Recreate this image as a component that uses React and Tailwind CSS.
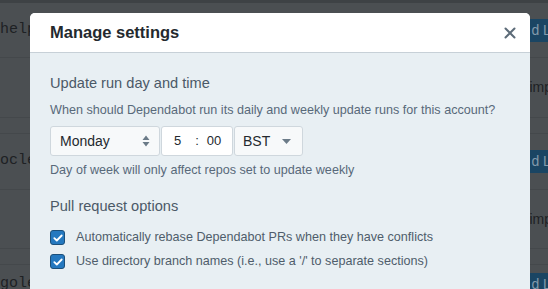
import React from 'react';

// Background table rows that sit behind the dimmed modal backdrop.
const rows = [
  { h: 55, left: 'chelp', right: 'btn' },
  { h: 60, left: 'y', right: 'imp' },
  { h: 16, left: '', right: '' },
  { h: 56, left: 'docle', right: 'btn' },
  { h: 59, left: 'y', right: 'imp' },
  { h: 16, left: '', right: '' },
  { h: 40, left: 'cgole', right: 'btn' },
];

const Checkbox = ({ label }) => (
  <label className="flex items-center gap-[11px] text-[12.6px] leading-[15px] text-[#4f5d6b]">
    <span className="flex h-[15px] w-[15px] items-center justify-center rounded-[3px] border border-[#1b4f7a] bg-[#2478bf]">
      <svg width="10" height="8" viewBox="0 0 10 8" fill="none">
        <path d="M1.3 4.1 3.8 6.5 8.7 1.5" stroke="white" strokeWidth="1.8" strokeLinecap="round" strokeLinejoin="round" />
      </svg>
    </span>
    {label}
  </label>
);

const App = () => {
  return (
    <div className="relative h-[289px] w-[548px] overflow-hidden bg-[#4b4f52]" style={{ fontFamily: '"Liberation Sans", Arial, sans-serif' }}>
      <div className="flex flex-col border-t-[3px] border-[#3e4245]">
        {rows.map((r, i) => (
          <div key={i} className="flex items-center justify-between border-b border-[#44484b]" style={{ height: r.h }}>
            <span className="-ml-[9px] text-[15px] text-[#1e2124]" style={{ fontFamily: '"Liberation Mono", monospace' }}>{r.left}</span>
            {r.right === 'btn' && (
              <span className="-mr-[12px] rounded-[3px] bg-[#1a4563] px-[6px] py-[1px] text-[14px] text-[#8299ab]">d Li</span>
            )}
            {r.right === 'imp' && <span className="-mr-[4px] text-[14px] text-[#1e2124]">imp</span>}
          </div>
        ))}
      </div>

      <div className="absolute left-[30px] top-[13px] w-[500px] overflow-hidden rounded-t-[5px] bg-[#e8eff3]">
        <div className="flex h-[40px] items-center justify-between border-b border-[#c7d0d7] bg-white pl-[20px] pr-[14px]">
          <h3 className="text-[16.5px] font-bold text-[#24292e]">Manage settings</h3>
          <svg width="12" height="12" viewBox="0 0 12 12" className="text-[#5c6b78]">
            <path d="M1.5 1.5 10.5 10.5M10.5 1.5 1.5 10.5" stroke="currentColor" strokeWidth="2" strokeLinecap="round" />
          </svg>
        </div>

        <div className="flex flex-col px-[20px] pb-[20px] pt-[21px]">
          <h4 className="text-[14.6px] leading-[18px] text-[#4b5967]">Update run day and time</h4>
          <p className="mt-[10px] text-[12.6px] leading-[16px] text-[#58697a]">
            When should Dependabot run its daily and weekly update runs for this account?
          </p>

          <div className="mt-[8px] flex h-[30px] gap-[1px] text-[14px] text-[#24292e]">
            <div className="flex w-[110px] items-center justify-between rounded-[3px] border border-[#cfd7dd] bg-[#f7f9fa] pl-[9px] pr-[9px]">
              Monday
              <svg width="8" height="12" viewBox="0 0 8 12" className="text-[#6b7b88]">
                <path d="M4 0.5 7.5 5H0.5Z M4 11.5 7.5 7H0.5Z" fill="currentColor" />
              </svg>
            </div>
            <div className="flex w-[72px] items-center rounded-[3px] border border-[#cfd7dd] bg-white pl-[12px] text-[13px]">
              <span>5</span>
              <span className="ml-[14px]">:</span>
              <span className="ml-[8px]">00</span>
            </div>
            <div className="flex w-[69px] items-center rounded-[3px] border border-[#cfd7dd] bg-[#f7f9fa] pl-[8px]">
              BST
              <svg width="9" height="5" viewBox="0 0 9 5" className="ml-[12px] text-[#6b7b88]">
                <path d="M0 0H9L4.5 5Z" fill="currentColor" />
              </svg>
            </div>
          </div>

          <p className="mt-[6px] text-[12.6px] leading-[16px] text-[#58697a]">
            Day of week will only affect repos set to update weekly
          </p>

          <h4 className="mt-[19px] text-[14.6px] leading-[18px] text-[#4b5967]">Pull request options</h4>

          <div className="mt-[15px] flex flex-col gap-[9px]">
            <Checkbox label="Automatically rebase Dependabot PRs when they have conflicts" />
            <Checkbox label="Use directory branch names (i.e., use a '/' to separate sections)" />
          </div>
        </div>
      </div>
    </div>
  );
};

export default App;
